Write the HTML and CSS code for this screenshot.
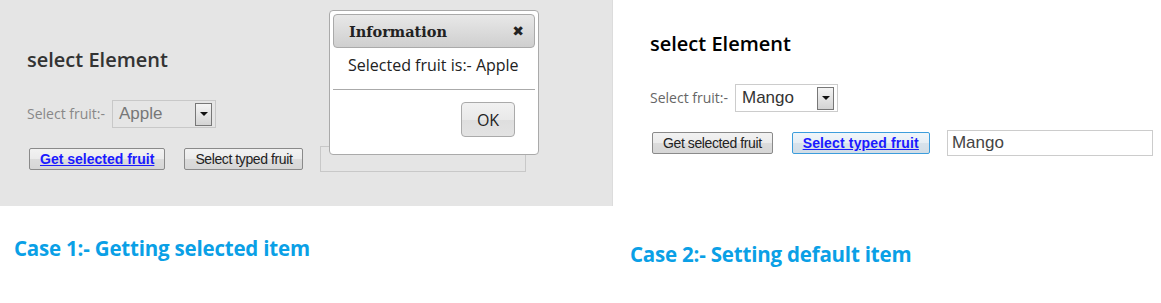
FILE: index.html
```html
<!DOCTYPE html>
<html>
<head>
<meta charset="utf-8">
<link rel="stylesheet" href="styles.css">
</head>
<body>
<div class="page">
  <div class="col col1">
    <section class="demo demo1">
      <h2 class="title">select Element</h2>
      <div class="field-row">
        <span class="label">Select fruit:-</span>
        <div class="select"><span class="select-value">Apple</span><span class="select-btn"><span class="tri"></span></span></div>
      </div>
      <div class="btn-row">
        <button class="btn btn-active">Get selected fruit</button>
        <button class="btn">Select typed fruit</button>
        <div class="textbox"></div>
      </div>
      <div class="dialog">
        <div class="dialog-title"><span>Information</span><span class="close">✖</span></div>
        <div class="dialog-body">Selected fruit is:- Apple</div>
        <div class="dialog-foot"><button class="ok">OK</button></div>
      </div>
    </section>
    <p class="caption caption1">Case 1:- Getting selected item</p>
  </div>
  <div class="col col2">
    <section class="demo demo2">
      <h2 class="title">select Element</h2>
      <div class="field-row">
        <span class="label">Select fruit:-</span>
        <div class="select"><span class="select-value">Mango</span><span class="select-btn"><span class="tri"></span></span></div>
      </div>
      <div class="btn-row">
        <button class="btn">Get selected fruit</button>
        <button class="btn btn-active btn-focus">Select typed fruit</button>
        <div class="textbox">Mango</div>
      </div>
    </section>
    <p class="caption caption2">Case 2:- Setting default item</p>
  </div>
</div>
</body>
</html>
```
FILE: styles.css
```css
* { box-sizing: border-box; }
html, body { margin: 0; padding: 0; background: #fff; }
body { width: 1161px; height: 303px; overflow: hidden; font-family: "Open Sans", sans-serif; }
.page { display: flex; }
.col1 { width: 613px; }
.col2 { flex: 1; }

.demo { position: relative; height: 206px; }
.demo1 { background: #e5e5e5; border-right: 1px solid #dcdcdc; padding: 48px 0 0 27px; color: #333; }
.demo2 { padding: 32px 0 0 37px; color: #000; }

.title { margin: 0; height: 24px; font-family: "Open Sans", sans-serif; font-weight: 600; font-size: 20px; line-height: 24px; }

.field-row { display: flex; align-items: center; height: 28px; margin-top: 28px; }
.label { font-family: "Open Sans", sans-serif; font-size: 14px; line-height: 18px; color: #888; margin-right: 7px; }
.demo2 .label { color: #666; }
.select { width: 104px; height: 28px; border: 1px solid #c8c8c8; display: flex; align-items: center; justify-content: space-between; padding: 0 3px 0 6px; }
.demo2 .select { width: 103px; border-color: #ccc; }
.select-value { font-family: "Liberation Sans", Arial, sans-serif; font-size: 17px; line-height: 20px; color: #777; }
.demo2 .select-value { color: #333; }
.select-btn { width: 17px; height: 23px; border: 1px solid #777; background: linear-gradient(#f4f4f4, #d4d4d4); display: flex; align-items: center; justify-content: center; }
.tri { width: 0; height: 0; border-left: 4px solid transparent; border-right: 4px solid transparent; border-top: 4px solid #111; }

.btn-row { display: flex; align-items: center; height: 26px; margin-top: 18px; padding-left: 2px; }
.btn { height: 22px; padding: 0 10px; border: 1px solid #8a8a8a; border-radius: 2px; background: linear-gradient(#f2f2f2 0%, #ebebeb 50%, #dcdcdc 51%, #d6d6d6 100%); font-family: "Liberation Sans", Arial, sans-serif; font-size: 14px; line-height: 18px; color: #222; letter-spacing: -0.4px; margin-right: 19px; white-space: nowrap; }
.btn-active { color: #1a1aff; font-weight: bold; font-size: 14px; text-decoration: underline; letter-spacing: 0; }
.btn-focus { border-color: #3c9ddc; letter-spacing: 0.15px; background: linear-gradient(#f0f6fa 0%, #e6eef4 50%, #d8e3ec 51%, #d2dde6 100%); }
.btn + .btn { margin-right: 17px; }
.textbox { width: 206px; height: 26px; border: 1px solid #c8c8c8; font-family: "Liberation Sans", Arial, sans-serif; font-size: 17px; color: #444; padding: 1px 4px; line-height: 22px; }
.demo2 .textbox { border-color: #ccc; }

.dialog { position: absolute; left: 329px; top: 10px; width: 210px; height: 145px; background: #fff; border: 1px solid #aaa; border-radius: 4px; padding: 3px; }
.dialog-title { height: 34px; border: 1px solid #aaa; border-radius: 4px; background: linear-gradient(#e8e8e8, #cfcfcf); display: flex; align-items: center; justify-content: space-between; padding: 0 10px 0 15px; font-family: "DejaVu Serif", serif; font-weight: bold; font-size: 14.5px; color: #222; }
.close { font-family: "DejaVu Sans", sans-serif; font-size: 14px; color: #222; }
.dialog-body { font-family: "Open Sans", sans-serif; font-size: 16px; line-height: 22px; color: #222; padding: 6px 0 0 15px; height: 42px; border-bottom: 1px solid #aaa; }
.dialog-foot { display: flex; justify-content: flex-end; padding: 12px 20px 0 0; }
.ok { width: 54px; height: 35px; border: 1px solid #aaa; border-radius: 4px; background: linear-gradient(#f1f1f1 0%, #e9e9e9 50%, #dedede 51%, #e3e3e3 100%); font-family: "Open Sans", sans-serif; font-size: 16px; color: #222; }

.caption { margin: 0; font-family: "Open Sans", sans-serif; font-weight: bold; font-size: 20.5px; line-height: 28px; color: #0aa0e6; letter-spacing: -0.2px; white-space: nowrap; }
.caption1 { margin: 28px 0 0 14px; }
.caption2 { margin: 34px 0 0 17px; }
```
